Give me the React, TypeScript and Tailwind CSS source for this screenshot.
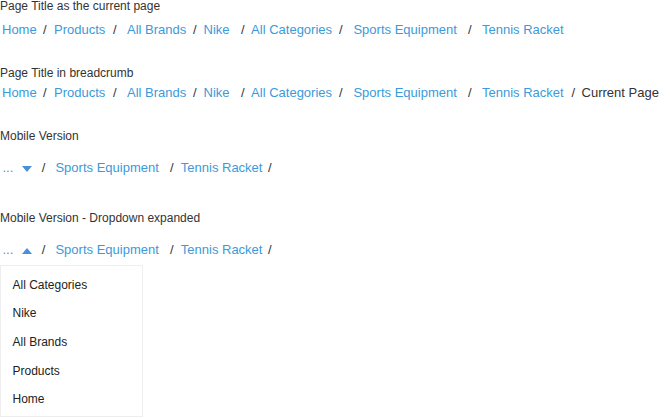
type Crumb = { text: string; ml: string; kind: "link" | "sep" | "current" };

const fullTrail: Crumb[] = [
  { text: "Home", ml: "ml-[2px]", kind: "link" },
  { text: "/", ml: "ml-[6.3px]", kind: "sep" },
  { text: "Products", ml: "ml-[7.4px]", kind: "link" },
  { text: "/", ml: "ml-[7.7px]", kind: "sep" },
  { text: "All Brands", ml: "ml-[10.4px]", kind: "link" },
  { text: "/", ml: "ml-[6.8px]", kind: "sep" },
  { text: "Nike", ml: "ml-[6.9px]", kind: "link" },
  { text: "/", ml: "ml-[11.5px]", kind: "sep" },
  { text: "All Categories", ml: "ml-[6.4px]", kind: "link" },
  { text: "/", ml: "ml-[6.9px]", kind: "sep" },
  { text: "Sports Equipment", ml: "ml-[10.9px]", kind: "link" },
  { text: "/", ml: "ml-[11.2px]", kind: "sep" },
  { text: "Tennis Racket", ml: "ml-[10.4px]", kind: "link" },
];

const withCurrent: Crumb[] = [
  ...fullTrail,
  { text: "/", ml: "ml-[7.9px]", kind: "sep" },
  { text: "Current Page", ml: "ml-[6.4px]", kind: "current" },
];

const dropdownItems = ["All Categories", "Nike", "All Brands", "Products", "Home"];

function CrumbText({ c }: { c: Crumb }) {
  if (c.kind === "link") {
    return (
      <a href="#" className={`${c.ml} text-[#3b9ad9] whitespace-pre`}>
        {c.text}
      </a>
    );
  }
  return <span className={`${c.ml} text-[#333] whitespace-pre`}>{c.text}</span>;
}

function Trail({ items }: { items: Crumb[] }) {
  return (
    <nav className="flex items-baseline text-[13px] leading-[14px]">
      {items.map((c, i) => (
        <CrumbText key={i} c={c} />
      ))}
    </nav>
  );
}

function Caret({ up }: { up?: boolean }) {
  return (
    <svg width="10" height="6" viewBox="0 0 10 6" className="ml-[8.4px]">
      {up ? <polygon points="5,0 10,6 0,6" fill="#4a90d9" /> : <polygon points="0,0 10,0 5,6" fill="#4a90d9" />}
    </svg>
  );
}

function MobileTrail({ open }: { open?: boolean }) {
  return (
    <nav className="flex items-baseline text-[13px] leading-[14px]">
      <span className="ml-[2.5px] text-[#3b9ad9]">...</span>
      <Caret up={open} />
      <span className="ml-[10px] text-[#333]">/</span>
      <a href="#" className="ml-[10.1px] text-[#3b9ad9]">Sports Equipment</a>
      <span className="ml-[11.3px] text-[#333]">/</span>
      <a href="#" className="ml-[7.1px] text-[#3b9ad9]">Tennis Racket</a>
      <span className="ml-[5.5px] text-[#333]">/</span>
    </nav>
  );
}

export default function App() {
  return (
    <div className="w-[670px] h-[418px] overflow-hidden bg-white font-['Liberation_Sans',Arial,sans-serif] text-[#333]">
      <h2 className="text-[12px] leading-[12px] font-normal">Page Title as the current page</h2>
      <div className="mt-[10.5px]">
        <Trail items={fullTrail} />
      </div>

      <h2 className="mt-[30.3px] text-[12px] leading-[12px] font-normal">Page Title in breadcrumb</h2>
      <div className="mt-[7.4px]">
        <Trail items={withCurrent} />
      </div>

      <h2 className="mt-[29.6px] text-[12px] leading-[12px] font-normal">Mobile Version</h2>
      <div className="mt-[19.7px]">
        <MobileTrail />
      </div>

      <h2 className="mt-[36.3px] text-[12px] leading-[12px] font-normal">Mobile Version - Dropdown expanded</h2>
      <div className="mt-[19.4px]">
        <MobileTrail open />
      </div>

      <ul className="mt-[7.8px] w-[143px] border border-[#eee] pt-[4.5px] pb-[2.5px]">
        {dropdownItems.map((item) => (
          <li key={item} className="h-[28.6px] flex items-center pl-[11.5px] text-[12px] text-[#222]">
            {item}
          </li>
        ))}
      </ul>
    </div>
  );
}
